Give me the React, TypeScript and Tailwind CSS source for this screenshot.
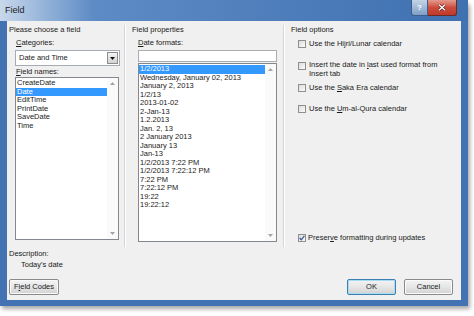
import React from "react";

const fieldNames = ["CreateDate", "Date", "EditTime", "PrintDate", "SaveDate", "Time"];

const dateFormats = [
  "1/2/2013",
  "Wednesday, January 02, 2013",
  "January 2, 2013",
  "1/2/13",
  "2013-01-02",
  "2-Jan-13",
  "1.2.2013",
  "Jan. 2, 13",
  "2 January 2013",
  "January 13",
  "Jan-13",
  "1/2/2013 7:22 PM",
  "1/2/2013 7:22:12 PM",
  "7:22 PM",
  "7:22:12 PM",
  "19:22",
  "19:22:12",
];

function Arrow({ up }: { up?: boolean }) {
  return (
    <svg width="5" height="3" viewBox="0 0 5 3">
      <path d={up ? "M0 3 L2.5 0 L5 3 Z" : "M0 0 L5 0 L2.5 3 Z"} fill="#a3a3a3" />
    </svg>
  );
}

function ListBox({
  items,
  selected,
  className,
}: {
  items: string[];
  selected: number;
  className: string;
}) {
  return (
    <div className={`flex border border-[#828790] bg-white ${className}`}>
      <div className="flex-1 pt-[1px]">
        {items.map((item, i) => (
          <div
            key={item}
            className={`h-[8.5px] pl-[1px] leading-[8.5px] whitespace-nowrap ${
              i === selected ? "bg-[#3399ff] text-white" : "text-[#1a1a1a]"
            }`}
          >
            {item}
          </div>
        ))}
      </div>
      <div className="flex w-[11px] flex-col items-center justify-between bg-[#fafafa] py-[4px]">
        <Arrow up />
        <Arrow />
      </div>
    </div>
  );
}

function Check({ checked }: { checked?: boolean }) {
  return (
    <div className="flex h-[8px] w-[8px] shrink-0 items-center justify-center border border-[#8f8f8f] bg-gradient-to-br from-[#dcdcdc] to-[#fbfbfb]">
      {checked && (
        <svg width="6" height="6" viewBox="0 0 6 6">
          <path d="M0.6 3 L2.3 4.8 L5.4 0.8" fill="none" stroke="#3c5a96" strokeWidth="1.3" />
        </svg>
      )}
    </div>
  );
}

function Button({
  children,
  primary,
  className,
}: {
  children: React.ReactNode;
  primary?: boolean;
  className: string;
}) {
  return (
    <div
      className={`flex h-[16px] items-center justify-center rounded-[2px] border bg-gradient-to-b from-[#f3f3f3] via-[#e6e6e6] to-[#d2d2d2] text-[#1a1a1a] ${
        primary
          ? "border-[#3c7fb1] shadow-[inset_0_0_0_1px_#a8dcf4]"
          : "border-[#8a8a8a] shadow-[inset_0_0_0_1px_#fafafa]"
      } ${className}`}
    >
      {children}
    </div>
  );
}

export default function App() {
  return (
    <div className="h-[316px] w-[474px] overflow-hidden bg-white font-['Liberation_Sans',Arial,sans-serif] text-[7.5px] text-[#1a1a1a]">
      <div className="flex h-[306px] w-[468px] flex-col rounded-tr-[5px] bg-[#4373b3] shadow-[2px_3px_4px_rgba(0,0,0,0.35)]">
        {/* title bar */}
        <div className="flex h-[21px] items-start bg-gradient-to-r from-[#c8d8eb] via-[#5d8bc5] via-20% to-[#3f70b0]">
          <div className="pl-[5px] pt-[5px] text-[9px] leading-[10px] text-[#1c1c1c]">Field</div>
          <div className="ml-auto mr-[11px] flex">
            <div className="flex h-[16px] w-[17px] items-center justify-center rounded-bl-[3px] border border-t-0 border-[#3a5f8f] bg-gradient-to-b from-[#c3d3e6] to-[#7f9fc6] text-[8px] font-bold text-white">
              ?
            </div>
            <div className="flex h-[16px] w-[29px] items-center justify-center rounded-br-[3px] border border-l-0 border-t-0 border-[#6b2a22] bg-gradient-to-b from-[#e39a8d] via-[#cc4b3c] to-[#c0392b]">
              <svg width="8" height="7" viewBox="0 0 8 7">
                <path d="M1 0.8 L7 6.2 M7 0.8 L1 6.2" stroke="#5a1d16" strokeWidth="2.6" />
                <path d="M1 0.8 L7 6.2 M7 0.8 L1 6.2" stroke="#ffffff" strokeWidth="1.4" />
              </svg>
            </div>
          </div>
        </div>

        {/* client area */}
        <div className="mx-[7px] mb-[6px] flex flex-1 flex-col bg-[#f0f0f0]">
          <div className="flex h-[226px] pt-[4px]">
            {/* left column */}
            <div className="flex w-[117px] flex-col">
              <div className="h-[10px] pl-[2px] leading-[10px]">Please choose a field</div>
              <div className="mt-[3px] h-[10px] pl-[9px] leading-[10px]">
                <span className="underline">C</span>ategories:
              </div>
              <div className="ml-[8px] mt-[2px] flex h-[16px] w-[105px] items-center border border-[#a5acb5] bg-white pl-[3px] pr-[1px]">
                <span className="flex-1">Date and Time</span>
                <div className="flex h-[12px] w-[11px] items-center justify-center border border-[#8c8c8c] bg-gradient-to-b from-[#f4f4f4] to-[#d3d3d3]">
                  <svg width="5" height="3" viewBox="0 0 5 3">
                    <path d="M0 0 L5 0 L2.5 3 Z" fill="#111" />
                  </svg>
                </div>
              </div>
              <div className="h-[11px] pl-[9px] leading-[11px]">
                <span className="underline">F</span>ield names:
              </div>
              <ListBox items={fieldNames} selected={1} className="ml-[8px] h-[163px] w-[104px]" />
            </div>
            <div className="w-[2px] border-l border-[#d5d5d5] bg-white" />

            {/* middle column */}
            <div className="flex w-[157px] flex-col">
              <div className="h-[10px] pl-[6px] leading-[10px]">Field properties</div>
              <div className="mt-[3px] h-[10px] pl-[12px] leading-[10px]">
                <span className="underline">D</span>ate formats:
              </div>
              <div className="ml-[12px] mt-[2px] h-[12px] w-[139px] border border-[#abadb3] bg-white" />
              <ListBox items={dateFormats} selected={0} className="ml-[12px] mt-[1px] h-[179px] w-[139px]" />
            </div>
            <div className="w-[2px] border-l border-[#d5d5d5] bg-white" />

            {/* right column */}
            <div className="flex flex-1 flex-col">
              <div className="h-[10px] pl-[6px] leading-[10px]">Field options</div>
              <div className="mt-[4px] flex gap-[3px] pl-[13px] leading-[9px]">
                <div className="pt-[1px]">
                  <Check />
                </div>
                <span>
                  Use the Hi<span className="underline">j</span>ri/Lunar calendar
                </span>
              </div>
              <div className="mt-[13px] flex gap-[3px] pl-[13px] leading-[8.5px]">
                <div className="pt-[0.5px]">
                  <Check />
                </div>
                <span>
                  Insert the date in <span className="underline">l</span>ast used format from
                  <br />
                  Insert tab
                </span>
              </div>
              <div className="mt-[5px] flex gap-[3px] pl-[13px] leading-[9px]">
                <div className="pt-[1px]">
                  <Check />
                </div>
                <span>
                  Use the <span className="underline">S</span>aka Era calendar
                </span>
              </div>
              <div className="mt-[12px] flex gap-[3px] pl-[13px] leading-[9px]">
                <div className="pt-[1px]">
                  <Check />
                </div>
                <span>
                  Use the <span className="underline">U</span>m-al-Qura calendar
                </span>
              </div>
              <div className="mb-[5px] mt-auto flex gap-[2px] pl-[13px] leading-[9px]">
                <div className="pt-[1px]">
                  <Check checked />
                </div>
                <span>
                  Preser<span className="underline">v</span>e formatting during updates
                </span>
              </div>
            </div>
          </div>

          <div className="mt-[2px] h-[10px] pl-[2px] leading-[10px]">Description:</div>
          <div className="mt-[1px] h-[10px] pl-[14px] leading-[10px]">Today's date</div>

          <div className="mt-[9px] flex gap-[8px] pl-[2px] pr-[8px]">
            <Button className="w-[50px]">
              F<span className="underline">i</span>eld Codes
            </Button>
            <Button primary className="ml-auto w-[49px]">
              OK
            </Button>
            <Button className="w-[49px]">Cancel</Button>
          </div>
        </div>
      </div>
    </div>
  );
}
